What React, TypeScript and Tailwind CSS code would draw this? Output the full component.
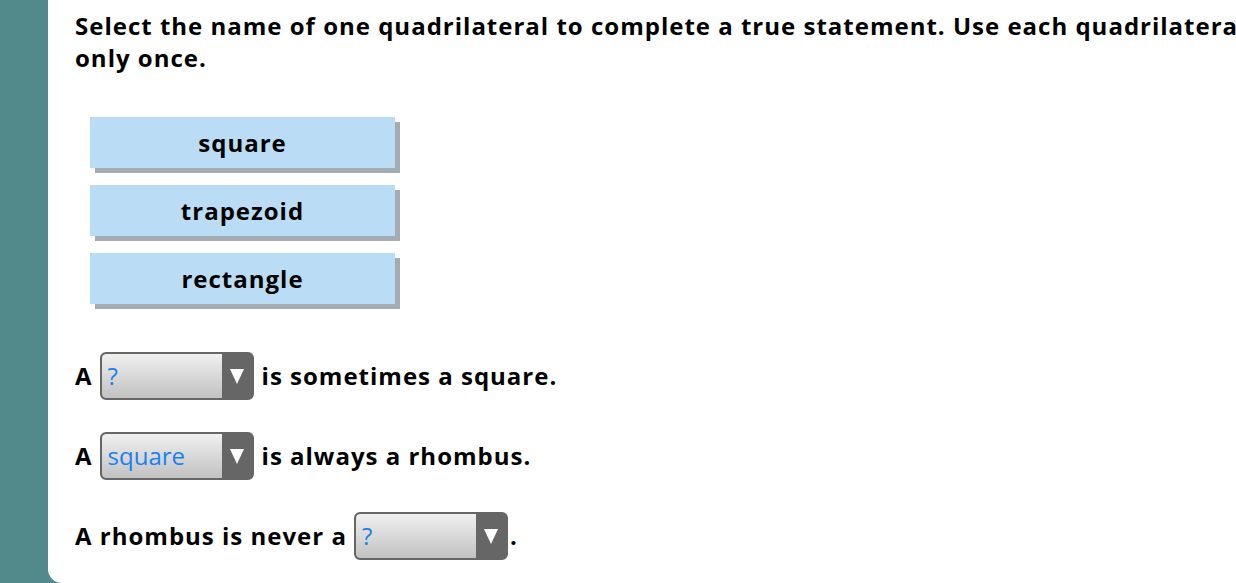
const cards = ["square", "trapezoid", "rectangle"];

function Dropdown({ value }: { value: string }) {
  return (
    <div className="flex h-[48px] w-[154px] overflow-hidden rounded-[6px] border-2 border-[#666666] bg-[#666666]">
      <div className="flex flex-1 items-center rounded-l-[4px] bg-gradient-to-b from-[#f0f0f0] to-[#c2c2c2] pl-[6px] text-[24px] font-normal tracking-normal text-[#1a80f0]">
        {value}
      </div>
      <div className="flex w-[30px] items-center justify-center">
        <svg width="14" height="16" viewBox="0 0 14 16">
          <polygon points="0,1 14,1 7,16" fill="#ffffff" />
        </svg>
      </div>
    </div>
  );
}

export default function App() {
  return (
    <div
      className="flex h-[583px] w-[1236px] overflow-hidden bg-[#528a8c]"
      style={{ fontFamily: '"Open Sans", "Noto Sans", sans-serif' }}
    >
      <div className="ml-[48px] flex-1 overflow-hidden rounded-bl-[14px] bg-white pl-[27px] pt-[10px] font-bold tracking-[1px] text-black">
        <p className="whitespace-nowrap text-[24px] leading-[32px]">
          Select the name of one quadrilateral to complete a true statement. Use each quadrilateral
          <br />
          only once.
        </p>

        {/* draggable answer cards */}
        <div className="ml-[15px] mt-[43px] flex flex-col gap-[17px]">
          {cards.map((c) => (
            <div
              key={c}
              className="flex h-[51px] w-[305px] items-center justify-center bg-[#badcf4] text-[24px] shadow-[5px_5px_0_#a3abb3]"
            >
              {c}
            </div>
          ))}
        </div>

        {/* statements */}
        <div className="mt-[48px] flex flex-col gap-[32px] text-[24px]">
          <div className="flex items-center">
            <span className="mr-[7px]">A</span>
            <Dropdown value="?" />
            <span className="ml-[8px]">is sometimes a square.</span>
          </div>
          <div className="flex items-center">
            <span className="mr-[7px]">A</span>
            <Dropdown value="square" />
            <span className="ml-[8px]">is always a rhombus.</span>
          </div>
          <div className="flex items-center">
            <span className="mr-[7px]">A rhombus is never a</span>
            <Dropdown value="?" />
            <span className="ml-[2px]">.</span>
          </div>
        </div>
      </div>
    </div>
  );
}
